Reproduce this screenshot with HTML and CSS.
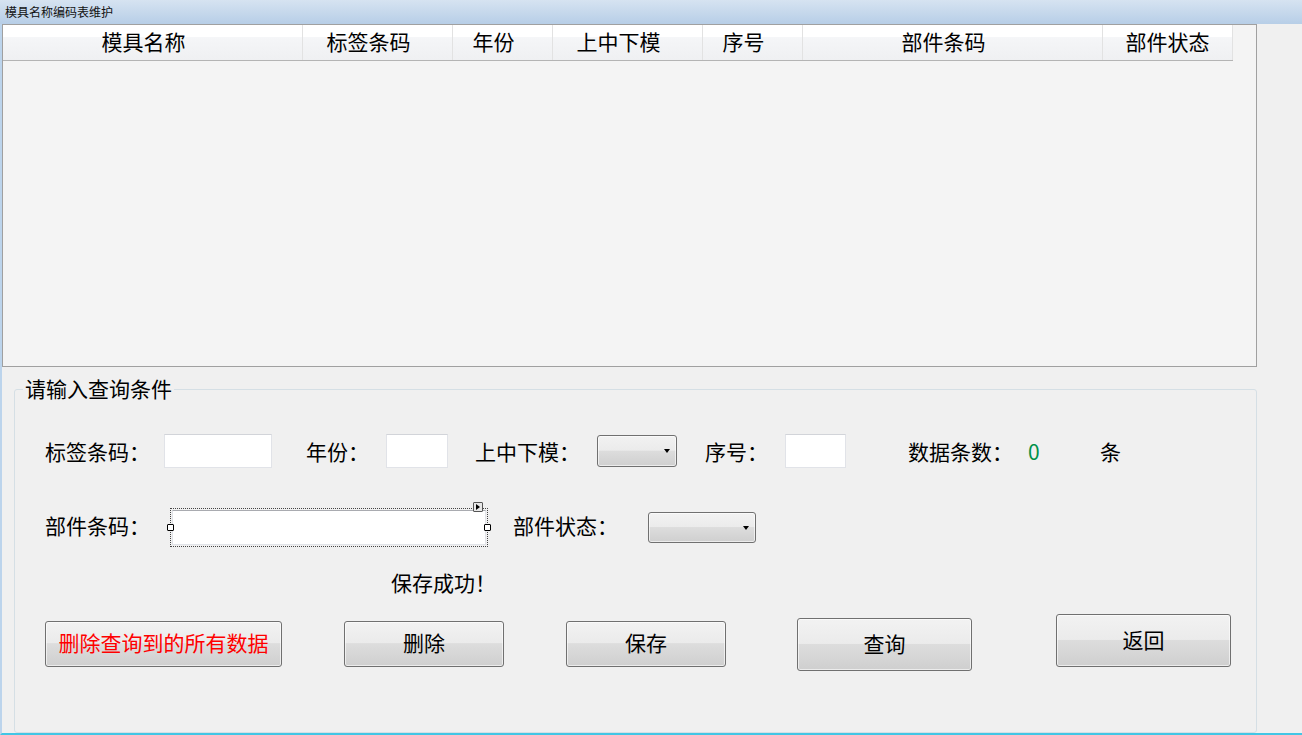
FILE: index.html
```html
<!DOCTYPE html>
<html lang="zh-CN">
<head>
    <meta charset="UTF-8">
    <meta name="viewport" content="width=device-width, initial-scale=1.0">
    <title>模具名称编码表维护</title>
    <link rel="stylesheet" href="styles.css">
</head>
<body>

<div class="titlebar">模具名称编码表维护</div>

<div class="window">
    <div class="grid">
        <div class="grid-head">
            <div class="col col-name">模具名称</div>
            <div class="col col-tag">标签条码</div>
            <div class="col col-year">年份</div>
            <div class="col col-pos">上中下模</div>
            <div class="col col-seq">序号</div>
            <div class="col col-part">部件条码</div>
            <div class="col col-state">部件状态</div>
        </div>
    </div>

    <fieldset class="query">
        <legend>请输入查询条件</legend>

        <div class="row row-first">
            <span class="lbl lbl-tag">标签条码：</span>
            <input type="text" class="txt txt-tag">
            <span class="lbl lbl-year">年份：</span>
            <input type="text" class="txt txt-year">
            <span class="lbl lbl-pos">上中下模：</span>
            <div class="combo combo-pos"></div>
            <span class="lbl lbl-seq">序号：</span>
            <input type="text" class="txt txt-seq">
            <span class="lbl lbl-count">数据条数：</span>
            <span class="count">0</span>
            <span class="lbl">条</span>
        </div>

        <div class="row row-second">
            <span class="lbl lbl-part">部件条码：</span>
            <div class="selected">
                <input type="text" class="txt txt-part">
                <span class="handle handle-left"></span>
                <span class="handle handle-right"></span>
                <span class="smart-tag"></span>
            </div>
            <span class="lbl lbl-state">部件状态：</span>
            <div class="combo combo-state"></div>
        </div>

        <div class="status">保存成功！</div>

        <div class="row row-buttons">
            <button class="btn btn-clear">删除查询到的所有数据</button>
            <button class="btn btn-delete">删除</button>
            <button class="btn btn-save">保存</button>
            <button class="btn btn-search">查询</button>
            <button class="btn btn-back">返回</button>
        </div>
    </fieldset>
</div>

</body>
</html>
```

FILE: styles.css
```css
* {
    box-sizing: border-box;
}
body {
    margin: 0;
    width: 1302px;
    height: 735px;
    overflow: hidden;
    background-color: #f0f0f0;
    font-family: "Noto Sans CJK SC", "Liberation Sans", sans-serif;
    font-size: 21px;
    color: #000;
}
.titlebar {
    height: 24px;
    line-height: 24px;
    padding-left: 5px;
    font-size: 12px;
    color: #111;
    background: linear-gradient(#d6e3f1, #b7cee7);
}
.window {
    height: 711px;
    border-left: 2px solid #bcd4ec;
    border-bottom: 2px solid #42c6e5;
}

/* data grid */
.grid {
    width: 1255px;
    height: 343px;
    border: 1px solid #a0a0a0;
    background-color: #f4f4f4;
}
.grid-head {
    display: flex;
    height: 36px;
    border-bottom: 1px solid #b4b4b4;
    width: 1230px;
    background: linear-gradient(#ffffff 0%, #ffffff 33%, #f5f6f8 34%, #eff0f2 100%);
}
.col {
    height: 35px;
    line-height: 33px;
    text-align: center;
    padding-right: 18px;
    border-right: 1px solid #e2e2e2;
    white-space: nowrap;
}
.col-name { width: 300px; }
.col-tag { width: 150px; }
.col-year { width: 100px; }
.col-pos { width: 150px; }
.col-seq { width: 100px; }
.col-part { width: 300px; }
.col-state { width: 130px; padding-right: 0; }

/* query group */
.query {
    margin: 10px 0 0 12px;
    padding: 0;
    width: 1243px;
    height: 356px;
    min-width: 0;
    border: 1px solid #d5dfe5;
    border-radius: 3px;
}
.query legend {
    margin-left: 8px;
    padding: 0 2px 2px;
    line-height: 22px;
}
.row {
    display: flex;
    align-items: center;
}
.row-first {
    margin-top: 32px;
    height: 36px;
}
.row-second {
    margin-top: 39px;
    height: 39px;
}
.row-second .lbl {
    margin-bottom: 6px;
}
.row-buttons {
    margin-top: 19px;
    align-items: flex-start;
}
.lbl {
    white-space: nowrap;
    flex-shrink: 0;
}
.lbl-tag, .lbl-part { margin-left: 30px; }
.lbl-year { margin-left: 34px; }
.lbl-pos { margin-left: 27px; }
.lbl-seq { margin-left: 28px; }
.lbl-count { margin-left: 62px; }
.lbl-state { margin-left: 25px; }

.txt {
    height: 34px;
    margin: 0;
    padding: 0 3px;
    background: #fff;
    border: 1px solid #e1e3e8;
    border-top-color: #d2d4d9;
    font: inherit;
    outline: none;
}
.txt-tag { width: 108px; margin-left: 14px; }
.txt-year { width: 62px; margin-left: 17px; }
.txt-seq { width: 61px; margin-left: 17px; }

.count {
    margin-left: 15px;
    width: 72px;
    color: #00904a;
}

.combo {
    height: 32px;
    display: flex;
    align-items: center;
    justify-content: flex-end;
    padding-right: 6px;
    border: 1px solid #707070;
    border-radius: 3px;
    background: linear-gradient(#f2f2f2 0%, #ebebeb 48%, #dddddd 49%, #cfcfcf 100%);
    box-shadow: inset 0 0 0 1px rgba(255, 255, 255, 0.6);
}
.combo::after {
    content: "";
    border-left: 3px solid transparent;
    border-right: 3px solid transparent;
    border-top: 4px solid #000;
}
.combo-pos { width: 80px; margin-left: 17px; }
.combo-state { width: 108px; height: 31px; margin-left: 30px; }

/* designer selection around the part textbox */
.selected {
    position: relative;
    display: flex;
    width: 318px;
    height: 39px;
    margin-left: 20px;
    padding: 1px;
    border: 1px dotted #444;
}
.txt-part {
    flex: 1;
    height: 35px;
    border-top-color: #a9abb0;
}
.handle {
    position: absolute;
    top: 15px;
    width: 7px;
    height: 7px;
    background: #fff;
    border: 1px solid #000;
    border-radius: 1px;
}
.handle-left { left: -4px; }
.handle-right { right: -4px; }
.smart-tag {
    position: absolute;
    top: -7px;
    left: 302px;
    width: 10px;
    height: 10px;
    border: 1px solid #555;
    border-radius: 1px;
    background: #e8e8e8;
    display: flex;
    align-items: center;
    justify-content: center;
}
.smart-tag::after {
    content: "";
    border-top: 3px solid transparent;
    border-bottom: 3px solid transparent;
    border-left: 4px solid #000;
}

.status {
    margin-top: 24px;
    padding-left: 376px;
    line-height: 22px;
    height: 24px;
}

button.btn {
    height: 46px;
    padding: 0 0 4px;
    font: inherit;
    color: #000;
    border: 1px solid #707070;
    border-radius: 3px;
    background: linear-gradient(#f2f2f2 0%, #ebebeb 48%, #dddddd 49%, #cfcfcf 100%);
    box-shadow: inset 0 0 0 1px rgba(255, 255, 255, 0.6);
    cursor: pointer;
}
.btn-clear { width: 237px; margin: 7px 0 0 30px; color: #ff0000 !important; }
.btn-delete { width: 160px; margin: 7px 0 0 62px; }
.btn-save { width: 160px; margin: 7px 0 0 62px; }
.btn-search { width: 175px; height: 53px !important; margin: 4px 0 0 71px; }
.btn-back { width: 175px; height: 53px !important; margin: 0 0 0 84px; }
```
